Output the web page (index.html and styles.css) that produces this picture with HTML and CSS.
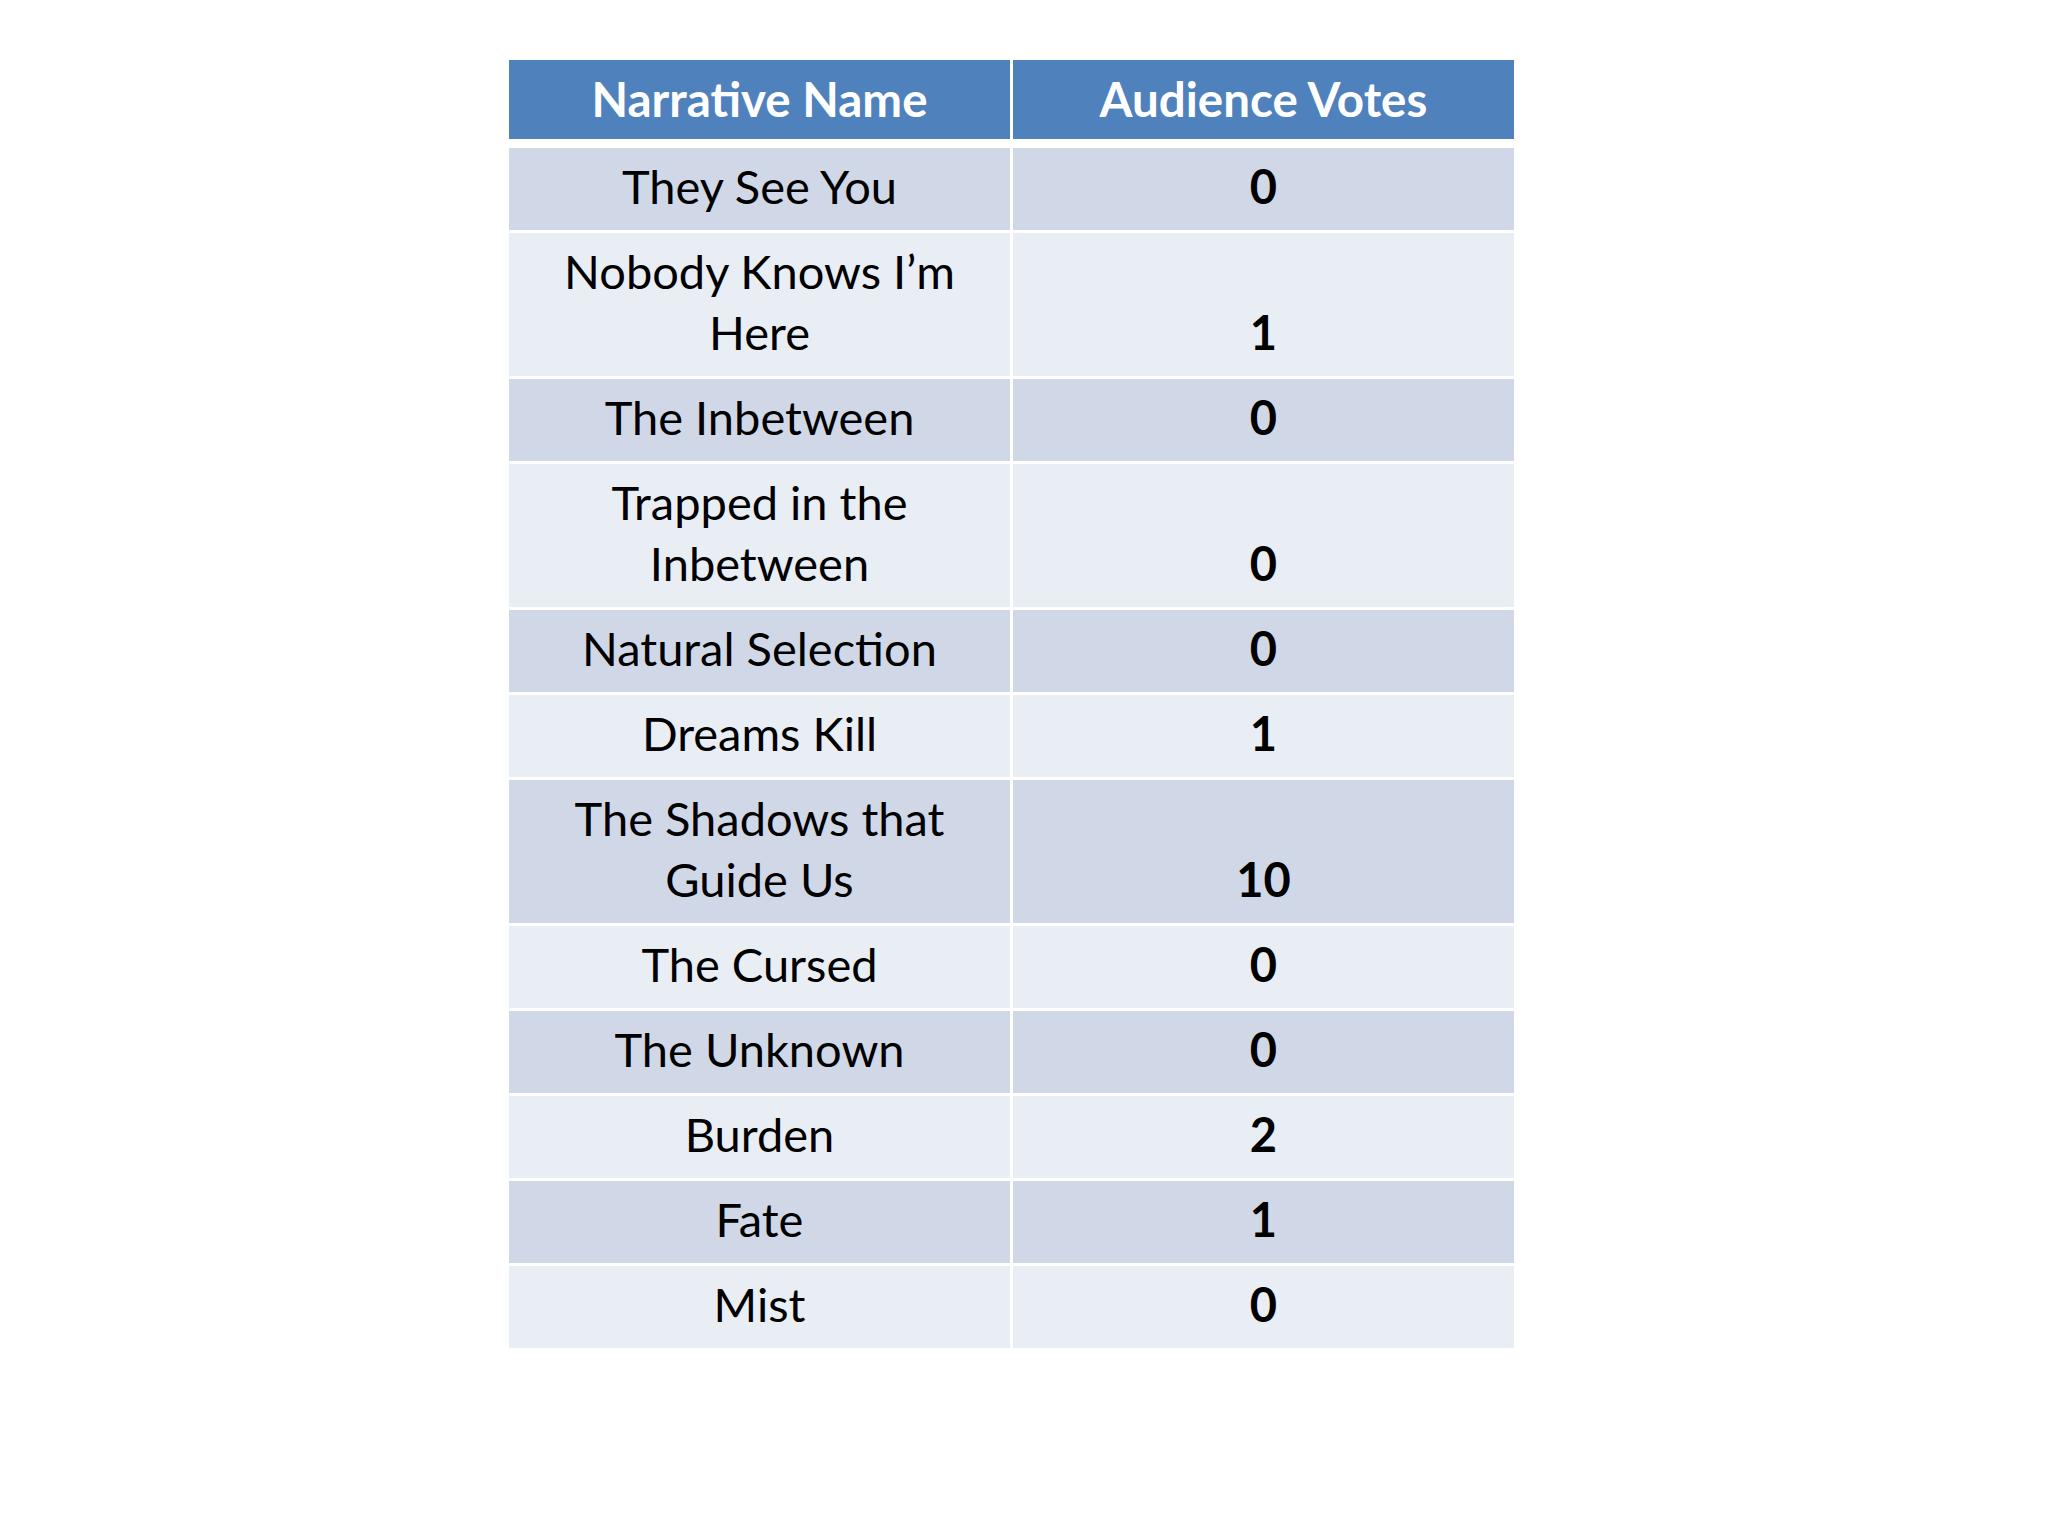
FILE: index.html
```html
<!DOCTYPE html>
<html lang="en">
<head>
<meta charset="utf-8">
<title>Narrative Votes</title>
<link rel="stylesheet" href="styles.css">
</head>
<body>
<main class="page">
  <div class="votes-table" role="table">
    <div class="cell head" role="columnheader">Narrative Name</div>
    <div class="cell head" role="columnheader">Audience Votes</div>

    <div class="cell name odd">They See You</div>
    <div class="cell num odd">0</div>

    <div class="cell name even">Nobody Knows I’m<br>Here</div>
    <div class="cell num even">1</div>

    <div class="cell name odd">The Inbetween</div>
    <div class="cell num odd">0</div>

    <div class="cell name even">Trapped in the<br>Inbetween</div>
    <div class="cell num even">0</div>

    <div class="cell name odd">Natural Selection</div>
    <div class="cell num odd">0</div>

    <div class="cell name even">Dreams Kill</div>
    <div class="cell num even">1</div>

    <div class="cell name odd">The Shadows that<br>Guide Us</div>
    <div class="cell num odd">10</div>

    <div class="cell name even">The Cursed</div>
    <div class="cell num even">0</div>

    <div class="cell name odd">The Unknown</div>
    <div class="cell num odd">0</div>

    <div class="cell name even">Burden</div>
    <div class="cell num even">2</div>

    <div class="cell name odd">Fate</div>
    <div class="cell num odd">1</div>

    <div class="cell name even">Mist</div>
    <div class="cell num even">0</div>
  </div>
</main>
</body>
</html>
```

FILE: styles.css
```css
html, body {
  margin: 0;
  padding: 0;
  background: #ffffff;
}

body {
  width: 2048px;
  height: 1536px;
  font-family: Lato, "Open Sans", "Liberation Sans", sans-serif;
  color: #000000;
}

.page {
  padding: 60px 0 0 509px;
}

.votes-table {
  display: grid;
  grid-template-columns: 501px 501px;
  column-gap: 3px;
  row-gap: 3px;
  width: 1005px;
}

.cell {
  display: flex;
  align-items: center;
  justify-content: center;
  text-align: center;
  font-size: 47px;
  line-height: 61px;
  padding: 7.5px 8px 13.5px;
}

.head {
  background: #4f81bd;
  color: #ffffff;
  font-weight: 700;
  font-size: 47.5px;
  padding: 8px 8px 10px;
  margin-bottom: 6px;
}

.odd {
  background: #d0d8e8;
}

.even {
  background: #e9edf4;
}

.num {
  font-weight: 700;
  align-items: flex-end;
}
```
